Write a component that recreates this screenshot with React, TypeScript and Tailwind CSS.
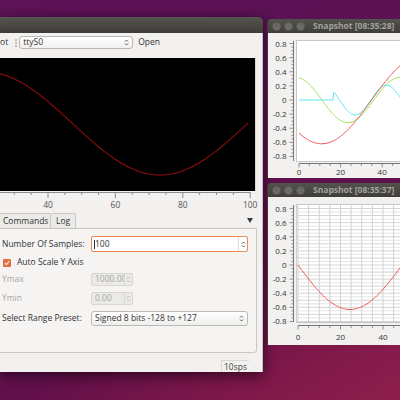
import React from "react";

const ui = "font-['Open_Sans',sans-serif]";

function Arrows({ disabled }: { disabled?: boolean }) {
  const c = disabled ? "#b8b7b3" : "#4a4a4a";
  return (
    <svg width="5" height="9" viewBox="0 0 5 9">
      <path d="M1 3.5 L2.5 2 L4 3.5" fill="none" stroke={c} strokeWidth="0.9" />
      <path d="M1 5.5 L2.5 7 L4 5.5" fill="none" stroke={c} strokeWidth="0.9" />
    </svg>
  );
}

function MainPlot() {
  const pts: string[] = [];
  for (let x = 0; x <= 248; x += 2) {
    const y = 65.5 + 51.5 * Math.cos((Math.PI * (x - 160)) / 175);
    pts.push(`${x},${y.toFixed(1)}`);
  }
  const X = (s: number) => 48 + (s - 40) * 3.37;
  const ticks: number[] = [];
  for (let s = 30; s <= 100; s += 5) ticks.push(s);
  return (
    <svg width="262" height="152" className="block">
      <rect x="0" y="0" width="255" height="133" fill="#000" />
      <line x1="255.5" y1="0" x2="255.5" y2="133" stroke="#d9d8d5" />
      <polyline points={pts.join(" ")} fill="none" stroke="#900d0d" strokeWidth="1.1" />
      <line x1="0" y1="134.5" x2="250.5" y2="134.5" stroke="#8c8c8c" />
      {ticks.map((s) => (
        <line
          key={s}
          x1={X(s)}
          x2={X(s)}
          y1="134"
          y2={s % 20 === 0 ? 140 : 137}
          stroke="#8c8c8c"
        />
      ))}
      {[40, 60, 80, 100].map((s) => (
        <text key={s} x={X(s)} y="149.5" textAnchor="middle" fontSize="8.5" fill="#555" fontFamily="Open Sans">
          {s}
        </text>
      ))}
    </svg>
  );
}

const yVals = [0.8, 0.6, 0.4, 0.2, 0, -0.2, -0.4, -0.6, -0.8];

function YAxis({ Y, top, bottom }: { Y: (v: number) => number; top: number; bottom: number }) {
  const minor: number[] = [];
  for (let i = -16; i <= 16; i++) minor.push(i * 0.05);
  return (
    <g>
      <line x1="25.5" x2="25.5" y1={top} y2={bottom} stroke="#777" />
      {minor.map((v, i) => (
        <line key={i} x1={i % 4 === 0 ? 21.5 : 23.5} x2="25.5" y1={Y(v)} y2={Y(v)} stroke="#777" strokeWidth="0.8" />
      ))}
      {yVals.map((v) => (
        <text key={v} x="18.5" y={Y(v) + 3} textAnchor="end" fontSize="8" fill="#333" fontFamily="Open Sans">
          {v === 0 ? "0" : v.toFixed(1)}
        </text>
      ))}
    </g>
  );
}

function XAxis({ X, y, ly }: { X: (s: number) => number; y: number; ly: number }) {
  const t: number[] = [];
  for (let s = 0; s <= 55; s += 5) t.push(s);
  return (
    <g>
      <line x1={X(0)} x2="140" y1={y} y2={y} stroke="#777" />
      {t.map((s) => (
        <line key={s} x1={X(s)} x2={X(s)} y1={y} y2={y + (s % 20 === 0 ? 4 : 2.5)} stroke="#777" strokeWidth="0.8" />
      ))}
      {[0, 20, 40].map((s) => (
        <text key={s} x={X(s)} y={ly} textAnchor="middle" fontSize="8" fill="#333" fontFamily="Open Sans">
          {s}
        </text>
      ))}
    </g>
  );
}

function curve(X: (s: number) => number, Y: (v: number) => number, f: (s: number) => number, a: number, b: number) {
  const p: string[] = [];
  for (let s = a; s <= b; s += 0.5) p.push(`${X(s).toFixed(1)},${Y(f(s)).toFixed(1)}`);
  return p.join(" ");
}

function Snap1() {
  const X = (s: number) => 31 + s * 2.08;
  const Y = (v: number) => 67 - v * 70.6;
  const red = (s: number) => -0.62 * Math.cos((2 * Math.PI * (s - 10.9)) / 96);
  const green = (s: number) => -0.32 * Math.cos((2 * Math.PI * (s - 23.5)) / 50);
  const cyan = (s: number) => -0.21 * Math.cos((2 * Math.PI * (s - 27)) / 30);
  const cyanPts = `${X(0)},${Y(0)} ${X(16.3)},${Y(0)} ` + curve(X, Y, cyan, 16.8, 60);
  return (
    <svg width="140" height="145" className="block">
      <defs>
        <clipPath id="c1">
          <rect x="28" y="8" width="112" height="120" />
        </clipPath>
      </defs>
      <rect x="28.5" y="7.5" width="120" height="121" fill="#fff" stroke="#c8c7c4" />
      <YAxis Y={Y} top={8} bottom={128} />
      <g clipPath="url(#c1)" fill="none" strokeWidth="1">
        <polyline points={curve(X, Y, green, 0, 60)} stroke="#9ee05a" />
        <polyline points={cyanPts} stroke="#5ce6ee" />
        <polyline points={curve(X, Y, red, 0, 60)} stroke="#f25252" />
      </g>
      <XAxis X={X} y={130.5} ly={142} />
    </svg>
  );
}

function Snap2() {
  const X = (s: number) => 30 + s * 2.125;
  const Y = (v: number) => 68 - v * 70.6;
  const red = (s: number) => -0.63 * Math.sin((2 * Math.PI * s) / 98);
  const vl: number[] = [];
  for (let s = 0; s <= 55; s += 5) vl.push(s);
  const hl: number[] = [];
  for (let i = -16; i <= 16; i++) hl.push(i * 0.05);
  return (
    <svg width="140" height="148" className="block">
      <defs>
        <clipPath id="c2">
          <rect x="28" y="8" width="112" height="117" />
        </clipPath>
      </defs>
      <rect x="28.5" y="7.5" width="120" height="118" fill="#fff" stroke="#c8c7c4" />
      <g clipPath="url(#c2)">
        {hl.map((v, i) => (
          <line key={i} x1="28" x2="140" y1={Y(v)} y2={Y(v)} stroke={i % 2 === 0 ? "#d4d4d4" : "#e6e6e6"} strokeWidth="1" />
        ))}
        {vl.map((s) => (
          <line key={s} x1={X(s)} x2={X(s)} y1="8" y2="125" stroke="#d2d2d2" strokeWidth="1" />
        ))}
        <polyline points={curve(X, Y, red, 0, 60)} fill="none" stroke="#f25252" strokeWidth="1" />
      </g>
      <YAxis Y={Y} top={8} bottom={125} />
      <XAxis X={X} y={128.5} ly={143} />
    </svg>
  );
}

function TitleButtons() {
  return (
    <div className="flex items-center gap-[3px] ml-[4px]">
      {["×", "–", "□"].map((g) => (
        <span
          key={g}
          className="w-[9px] h-[9px] rounded-full bg-[#6e6d69] border border-[#5a5955] text-[6px] leading-[6px] text-[#4e4d49] flex items-center justify-center"
        >
          {g}
        </span>
      ))}
    </div>
  );
}

function SnapWindow({ time, bodyH, children }: { time: string; bodyH: string; children: React.ReactNode }) {
  return (
    <div className="w-[150px] shrink-0 flex flex-col border-l border-[#3a3935] rounded-tl-[4px] overflow-hidden">
      <div className="h-[14px] bg-gradient-to-b from-[#53524d] to-[#3f3e3a] flex items-center">
        <TitleButtons />
        <span className="ml-[8px] text-[8.5px] font-bold text-[#a3a29e] leading-none whitespace-nowrap">
          Snapshot [{time}]
        </span>
      </div>
      <div className={`${bodyH} bg-[#f2f1f0]`}>{children}</div>
    </div>
  );
}

export default function App() {
  return (
    <div
      className={`w-[400px] h-[400px] overflow-hidden flex items-start gap-[4px] pt-[17px] bg-[linear-gradient(150deg,#5e1358_0%,#5b1152_45%,#62104b_65%,#7c1749_82%,#8e1f4c_100%)] ${ui}`}
    >
      <div className="w-[263px] h-[355px] shrink-0 flex flex-col shadow-[0_3px_14px_rgba(20,0,15,0.75)] rounded-tr-[5px]">
        <div className="h-[16px] bg-gradient-to-b from-[#56554f] to-[#3d3c38] rounded-tr-[5px]" />
        <div className="flex-1 bg-[#f2f1f0] flex flex-col text-[8.5px] text-[#333] overflow-hidden border-r border-[#c4c2be]">
          <div className="h-[19px] flex items-center whitespace-nowrap">
            <span className="-ml-[29px] shrink-0">Snapshot</span>
            <span className="ml-[7px] h-[8px] border-l-2 border-dotted border-[#c2c0bb]" />
            <div className="ml-[2px] w-[114px] h-[13px] shrink-0 rounded-[3px] border border-[#b9b7b3] bg-gradient-to-b from-[#ffffff] to-[#f1f0ef] flex items-center justify-between pl-[3px] pr-[3px]">
              <span>ttyS0</span>
              <Arrows />
            </div>
            <span className="ml-[5px]">Open</span>
          </div>
          <div className="mt-[6px]">
            <MainPlot />
          </div>
          <div className="mt-[3px] h-[15px] flex items-stretch whitespace-nowrap">
            <div className="-ml-[1px] w-[52px] border border-b-0 border-[#c9c7c3] bg-[#ebeae8] rounded-tr-[2px] flex items-center pl-[3px]">
              Commands
            </div>
            <div className="w-[25px] border-t border-r border-[#c9c7c3] bg-[#ebeae8] rounded-t-[2px] flex items-center pl-[5px]">
              Log
            </div>
            <div className="flex-1 flex items-center justify-end pr-[9px]">
              <svg width="6" height="5" viewBox="0 0 6 5">
                <path d="M0 0 H6 L3 5 Z" fill="#3c3c3c" />
              </svg>
            </div>
          </div>
          <div className="-ml-[2px] w-[259px] h-[125px] border border-[#c9c7c3] bg-[#f5f4f3] rounded-br-[3px] pl-[3px] pt-[7px] flex flex-col whitespace-nowrap">
            <div className="h-[16px] flex items-center">
              <span className="w-[89px]">Number Of Samples:</span>
              <div className="w-[157px] h-[16px] border border-[#e9895a] rounded-[2px] bg-white flex items-center">
                <span className="ml-[2px] w-[1px] h-[9px] bg-[#333]" />
                <span className="flex-1">100</span>
                <span className="w-[9px] h-full border-l border-[#dddcd9] flex items-center justify-center">
                  <Arrows />
                </span>
              </div>
            </div>
            <div className="mt-[3px] h-[15px] flex items-center">
              <span className="ml-[1px] w-[8px] h-[8px] rounded-[1px] bg-[#e2703d] flex items-center justify-center">
                <svg width="6" height="6" viewBox="0 0 6 6">
                  <path d="M0.8 3 L2.4 4.6 L5.2 1.2" fill="none" stroke="#fbe3d6" strokeWidth="1.1" />
                </svg>
              </span>
              <span className="ml-[6px]">Auto Scale Y Axis</span>
            </div>
            <div className="mt-[3px] h-[13px] flex items-center text-[#a9a8a4]">
              <span className="w-[89px]">Ymax</span>
              <div className="w-[42px] h-[13px] border border-[#d8d6d2] rounded-[2px] bg-[#ebeae8] flex items-center overflow-hidden">
                <span className="flex-1 pl-[3px] overflow-hidden">1000.00</span>
                <span className="w-[8px] h-full border-l border-[#d8d6d2] flex items-center justify-center">
                  <Arrows disabled />
                </span>
              </div>
            </div>
            <div className="mt-[6px] h-[13px] flex items-center text-[#a9a8a4]">
              <span className="w-[89px]">Ymin</span>
              <div className="w-[42px] h-[13px] border border-[#d8d6d2] rounded-[2px] bg-[#ebeae8] flex items-center overflow-hidden">
                <span className="flex-1 pl-[3px]">0.00</span>
                <span className="w-[8px] h-full border-l border-[#d8d6d2] flex items-center justify-center">
                  <Arrows disabled />
                </span>
              </div>
            </div>
            <div className="mt-[6px] h-[15px] flex items-center">
              <span className="w-[89px]">Select Range Preset:</span>
              <div className="w-[157px] h-[15px] border border-[#bcbab6] rounded-[3px] bg-gradient-to-b from-[#ffffff] to-[#efeeec] flex items-center justify-between pl-[3px] pr-[3px]">
                <span>Signed 8 bits -128 to +127</span>
                <Arrows />
              </div>
            </div>
          </div>
          <div className="h-[19px] flex items-end justify-end pr-[13px]">
            <span className="h-[12px] px-[2px] border-l border-t border-[#dad8d4] leading-[12px] text-[#444]">10sps</span>
          </div>
        </div>
      </div>
      <div className="mt-[2px] flex flex-col gap-[5px] shrink-0">
        <SnapWindow time="08:35:28" bodyH="h-[145px]">
          <Snap1 />
        </SnapWindow>
        <SnapWindow time="08:35:37" bodyH="h-[148px]">
          <Snap2 />
        </SnapWindow>
      </div>
    </div>
  );
}
